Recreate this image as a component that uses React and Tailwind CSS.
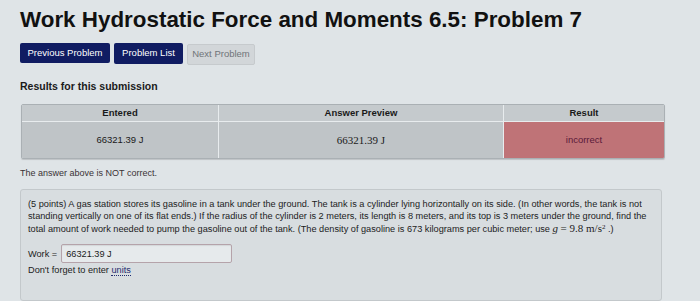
export default function App() {
  return (
    <div className="w-[700px] h-[301px] overflow-hidden bg-[#dfe4e7] text-[#1a1a1a]" style={{ fontFamily: '"Liberation Sans", Arial, sans-serif' }}>
      <div className="pl-[20px] pt-[6px]">
        <h1 className="text-[22.4px] font-bold leading-[28px] text-[#111]">Work Hydrostatic Force and Moments 6.5: Problem 7</h1>
        <div className="flex gap-[4px] mt-[9px] items-start">
          <div className="h-[20px] w-[90px] rounded-[2px] bg-[#101c62] text-white text-[9.5px] flex items-center justify-center">Previous Problem</div>
          <div className="h-[21px] w-[69px] rounded-[2px] bg-[#101c62] text-white text-[9.5px] flex items-center justify-center">Problem List</div>
          <div className="h-[21px] w-[68px] rounded-[2px] bg-[#d2d6d9] border border-[#c6cacd] text-[#707478] text-[9.5px] flex items-center justify-center mt-[1px]">Next Problem</div>
        </div>
        <div className="mt-[14px] text-[10.5px] font-bold leading-[14px]">Results for this submission</div>
        <div className="mt-[11px] ml-[1px] w-[644px] border border-[#aab0b4] rounded-[2px] overflow-hidden shadow-[0_1px_1px_rgba(0,0,0,0.15)]">
          <div className="flex h-[17px] bg-[#c5cacd] text-[9.5px] font-bold border-b border-[#e8ecee]">
            <div className="w-[197px] flex items-center justify-center border-r border-[#e8ecee]">Entered</div>
            <div className="w-[285px] flex items-center justify-center border-r border-[#e8ecee]">Answer Preview</div>
            <div className="flex-1 flex items-center justify-center">Result</div>
          </div>
          <div className="flex h-[36px] bg-[#bfc4c7] text-[9.5px]">
            <div className="w-[197px] flex items-center justify-center border-r border-[#e8ecee]">66321.39 J</div>
            <div className="w-[285px] flex items-center justify-center border-r border-[#e8ecee] text-[11px]" style={{ fontFamily: '"Liberation Serif", "Times New Roman", serif' }}>66321.39 J</div>
            <div className="flex-1 flex items-center justify-center bg-[#bf7377] text-[#5a1a3a]">incorrect</div>
          </div>
        </div>
        <div className="mt-[8px] text-[9px] leading-[12px] text-[#3a3236]">The answer above is NOT correct.</div>
        <div className="mt-[10px] w-[642px] h-[112px] bg-[#d8dde0] border border-[#c3c8cb] rounded-[3px] pl-[7px] pt-[8px] text-[9.2px] leading-[12px] text-[#1c1c1c]">
          <div className="whitespace-nowrap">(5 points) A gas station stores its gasoline in a tank under the ground. The tank is a cylinder lying horizontally on its side. (In other words, the tank is not</div>
          <div className="whitespace-nowrap">standing vertically on one of its flat ends.) If the radius of the cylinder is 2 meters, its length is 8 meters, and its top is 3 meters under the ground, find the</div>
          <div className="whitespace-nowrap">total amount of work needed to pump the gasoline out of the tank. (The density of gasoline is 673 kilograms per cubic meter; use <span className="italic text-[11px]" style={{ fontFamily: '"Liberation Serif", serif' }}>g</span> <span className="text-[11px]" style={{ fontFamily: '"Liberation Serif", serif' }}>= 9.8 m/s<sup className="text-[7px]">2</sup></span> .)</div>
          <div className="flex items-center mt-[9px]">
            <span>Work = </span>
            <div className="ml-[4px] w-[171px] h-[19px] bg-[#e6eaec] border border-[#b5a3aa] rounded-[2px] flex items-center pl-[4px] shadow-[inset_0_1px_1px_rgba(0,0,0,0.08)]">66321.39 J</div>
          </div>
          <div className="mt-[1px]">Don't forget to enter <span className="text-[#1f2a6e] border-b border-dotted border-[#1f2a6e]">units</span></div>
        </div>
      </div>
    </div>
  );
}
